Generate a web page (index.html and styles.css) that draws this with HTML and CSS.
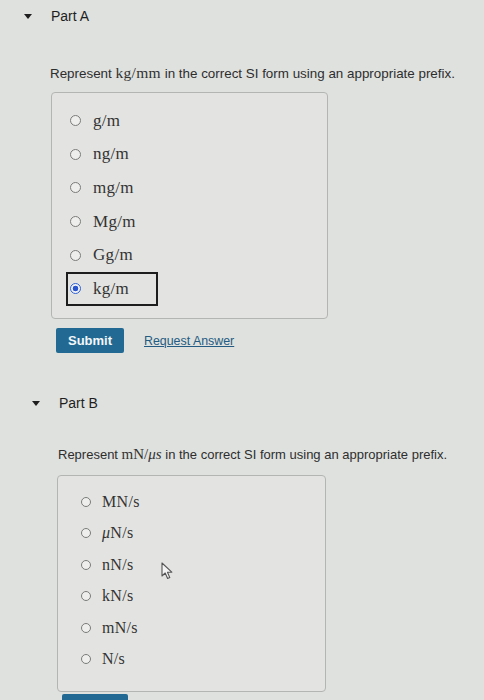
FILE: index.html
```html
<!DOCTYPE html>
<html lang="en">
<head>
<meta charset="utf-8">
<title>Parts</title>
<link rel="stylesheet" href="styles.css">
</head>
<body>
<section class="part part-a">
  <div class="part-header"><span class="caret"></span><span class="part-title">Part A</span></div>
  <p class="question">Represent <span class="math">kg/mm</span> in the correct SI form using an appropriate prefix.</p>
  <div class="choices">
    <div class="choice"><span class="radio"></span><span class="math opt">g/m</span></div>
    <div class="choice"><span class="radio"></span><span class="math opt">ng/m</span></div>
    <div class="choice"><span class="radio"></span><span class="math opt">mg/m</span></div>
    <div class="choice"><span class="radio"></span><span class="math opt">Mg/m</span></div>
    <div class="choice"><span class="radio"></span><span class="math opt">Gg/m</span></div>
    <div class="choice selected"><span class="radio checked"></span><span class="math opt">kg/m</span></div>
  </div>
  <div class="actions">
    <button class="submit">Submit</button>
    <a class="request" href="#">Request Answer</a>
  </div>
</section>
<section class="part part-b">
  <div class="part-header"><span class="caret"></span><span class="part-title">Part B</span></div>
  <p class="question">Represent <span class="math">mN/<i>μs</i></span> in the correct SI form using an appropriate prefix.</p>
  <div class="choices">
    <div class="choice"><span class="radio"></span><span class="math opt">MN/s</span></div>
    <div class="choice"><span class="radio"></span><span class="math opt"><i>μ</i>N/s</span></div>
    <div class="choice"><span class="radio"></span><span class="math opt">nN/s</span></div>
    <div class="choice"><span class="radio"></span><span class="math opt">kN/s</span></div>
    <div class="choice"><span class="radio"></span><span class="math opt">mN/s</span></div>
    <div class="choice"><span class="radio"></span><span class="math opt">N/s</span></div>
    <svg class="cursor" width="14" height="18" viewBox="0 0 14 18"><path d="M1 1 L1 14 L4.2 11 L6.6 16.5 L8.8 15.6 L6.5 10.2 L10.8 10.2 Z" fill="#f4f4f4" stroke="#555" stroke-width="1.1" stroke-linejoin="round"/></svg>
  </div>
  <div class="actions">
    <button class="submit" aria-label="Submit"></button>
  </div>
</section>
</body>
</html>
```
FILE: styles.css
```css
html, body {
  margin: 0;
  padding: 0;
  height: 700px;
  overflow: hidden;
}
body {
  background: #dfe1de;
  font-family: "Liberation Sans", Arial, sans-serif;
  color: #2a2a2a;
}
.part-a {
  padding-top: 6px;
}
.part-header {
  height: 20px;
  display: flex;
  align-items: center;
}
.caret {
  width: 0;
  height: 0;
  border-left: 4px solid transparent;
  border-right: 4px solid transparent;
  border-top: 5px solid #1e1e1e;
}
.part-title {
  font-size: 14px;
  color: #1e1e1e;
}
.part-a .caret { margin-left: 24px; }
.part-a .part-title { margin-left: 19px; }
.question {
  margin: 0;
  font-size: 13px;
  line-height: 18px;
  color: #2e2e2e;
}
.math {
  font-family: "Liberation Serif", "Times New Roman", serif;
  font-size: 15px;
  color: #333;
}
.part-a .question {
  margin-top: 38px;
  padding-left: 50px;
  font-size: 13.4px;
}
.part-a .question .math {
  font-size: 15.5px;
  letter-spacing: 0.3px;
}
.choices {
  position: relative;
  box-sizing: border-box;
  border: 1px solid #b3b5b2;
  border-radius: 4px;
  background: #e3e4e1;
}
.part-a .choices {
  margin: 9px 0 0 51px;
  width: 277px;
  height: 227px;
  padding: 11px 0 0 14px;
}
.choice {
  box-sizing: border-box;
  height: 33.6px;
  width: fit-content;
  display: flex;
  align-items: center;
  gap: 12px;
  padding: 0 27px 0 2px;
  border: 2px solid transparent;
}
.choice.selected {
  border-color: #1d1d1d;
}
.radio {
  box-sizing: border-box;
  width: 11px;
  height: 11px;
  border: 1.5px solid #7a7c7a;
  border-radius: 50%;
  background: #eeeeec;
  flex: none;
}
.radio.checked {
  border: 1.5px solid #2f62d6;
  background: radial-gradient(circle, #2a55d0 0 2.6px, #f2f2f2 3.1px);
}
.opt {
  font-size: 17px;
  letter-spacing: 0.3px;
  color: #333;
}
.actions {
  display: flex;
  align-items: center;
  gap: 20px;
}
.part-a .actions {
  margin: 9px 0 0 56px;
}
.submit {
  width: 68px;
  height: 25px;
  border: none;
  border-radius: 2px;
  background: #226a93;
  color: #f4f7f9;
  font-family: "Liberation Sans", Arial, sans-serif;
  font-size: 13px;
  font-weight: bold;
  padding: 0;
}
.request {
  font-size: 12.4px;
  color: #235b82;
  text-decoration: underline;
}
.part-b .part-header { margin-top: 40px; }
.part-b .caret { margin-left: 32px; }
.part-b .part-title { margin-left: 19px; }
.part-b .question {
  margin-top: 32px;
  padding-left: 58px;
}
.part-b .choices {
  margin: 11px 0 0 57px;
  width: 269px;
  height: 217px;
  padding: 10px 0 0 19px;
}
.part-b .choice {
  height: 31.5px;
  gap: 11px;
}
.part-b .radio {
  width: 10px;
  height: 10px;
}
.part-b .opt {
  font-size: 16px;
}
.cursor {
  position: absolute;
  left: 103px;
  top: 86px;
}
.part-b .actions {
  margin: 2px 0 0 62px;
}
.part-b .submit {
  width: 66px;
}
```
